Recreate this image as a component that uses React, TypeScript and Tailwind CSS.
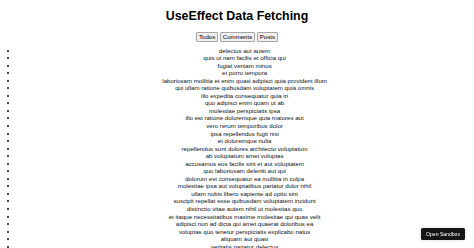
import React, { useState } from "react";

const todos = [
  "delectus aut autem",
  "quis ut nam facilis et officia qui",
  "fugiat veniam minus",
  "et porro tempora",
  "laboriosam mollitia et enim quasi adipisci quia provident illum",
  "qui ullam ratione quibusdam voluptatem quia omnis",
  "illo expedita consequatur quia in",
  "quo adipisci enim quam ut ab",
  "molestiae perspiciatis ipsa",
  "illo est ratione doloremque quia maiores aut",
  "vero rerum temporibus dolor",
  "ipsa repellendus fugit nisi",
  "et doloremque nulla",
  "repellendus sunt dolores architecto voluptatum",
  "ab voluptatum amet voluptas",
  "accusamus eos facilis sint et aut voluptatem",
  "quo laboriosam deleniti aut qui",
  "dolorum est consequatur ea mollitia in culpa",
  "molestiae ipsa aut voluptatibus pariatur dolor nihil",
  "ullam nobis libero sapiente ad optio sint",
  "suscipit repellat esse quibusdam voluptatem incidunt",
  "distinctio vitae autem nihil ut molestias quo",
  "et itaque necessitatibus maxime molestiae qui quas velit",
  "adipisci non ad dicta qui amet quaerat doloribus ea",
  "voluptas quo tenetur perspiciatis explicabo natus",
  "aliquam aut quasi",
  "veritatis pariatur delectus",
  "nesciunt totam sit blanditiis sit",
  "laborum aut in quam",
];

const tabs = ["Todos", "Comments", "Posts"];

export default function App() {
  const [resource, setResource] = useState("Todos");

  return (
    <div className="px-[3px] pt-[1px] text-center text-black font-['Liberation_Sans',Arial,sans-serif]">
      <h1 className="text-[12.4px] leading-[14.5px] font-bold my-[8px]">UseEffect Data Fetching</h1>
      <div className="flex justify-center gap-[1.5px] text-[6.1px] leading-[7px]">
        {tabs.map((t) => (
          <button
            key={t}
            onClick={() => setResource(t)}
            className="px-[2px] py-[0.5px] bg-[#efefef] border border-[#a5a5a5] rounded-[1px] text-black"
          >
            {t}
          </button>
        ))}
      </div>
      <ul className="list-disc pl-[15.2px] mt-[5px] mb-[6px] text-[6.1px] leading-[7.55px] text-[#111]">
        {todos.map((title, i) => (
          <li key={i}>{title}</li>
        ))}
      </ul>
      <div className="fixed right-[9px] bottom-[8px] bg-[#151515] text-white text-[5.1px] leading-[6px] px-[5px] py-[3px] rounded-[1.5px] shadow-[0_0_4px_rgba(0,0,0,0.15)]">
        Open Sandbox
      </div>
      <span className="hidden">{resource}</span>
    </div>
  );
}
